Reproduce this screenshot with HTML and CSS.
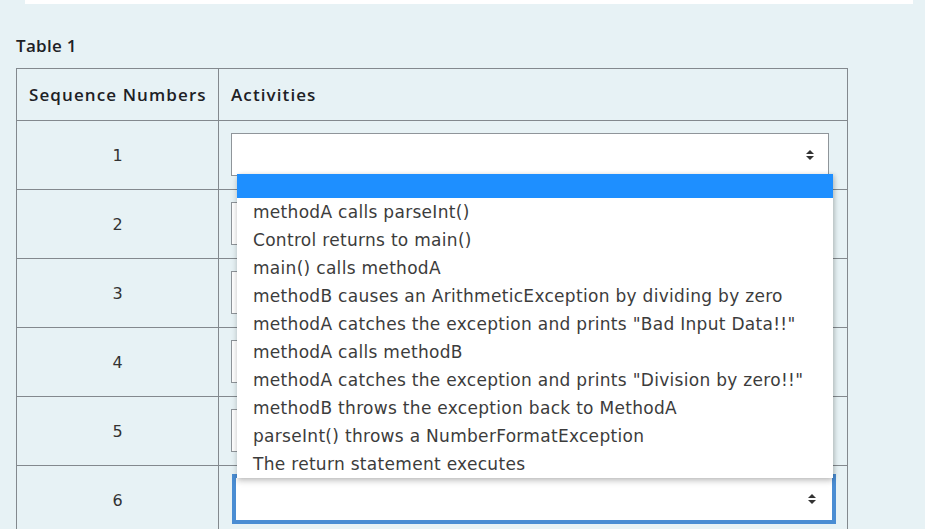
FILE: index.html
```html
<!DOCTYPE html>
<html lang="en">
<head>
<meta charset="utf-8">
<title>Table 1</title>
<link rel="stylesheet" href="styles.css">
</head>
<body>
<div class="topbar"></div>
<div class="caption">Table 1</div>
<div class="grid">
  <div class="cell head num-head">Sequence Numbers</div>
  <div class="cell head">Activities</div>

  <div class="cell num">1</div>
  <div class="cell act"><div class="select"><svg class="arrow" width="10" height="12" viewBox="0 0 10 12"><path d="M1 5 L5 1 L9 5 Z M1 7 L5 11 L9 7 Z" fill="#333"/></svg></div></div>

  <div class="cell num">2</div>
  <div class="cell act"><div class="select"></div></div>

  <div class="cell num">3</div>
  <div class="cell act"><div class="select"></div></div>

  <div class="cell num">4</div>
  <div class="cell act"><div class="select"></div></div>

  <div class="cell num">5</div>
  <div class="cell act"><div class="select"></div></div>

  <div class="cell num">6</div>
  <div class="cell act"><div class="select focused"><svg class="arrow" width="10" height="12" viewBox="0 0 10 12"><path d="M1 5 L5 1 L9 5 Z M1 7 L5 11 L9 7 Z" fill="#333"/></svg></div></div>
</div>

<ul class="dropdown">
  <li class="opt blank"></li>
  <li class="opt">methodA calls parseInt()</li>
  <li class="opt">Control returns to main()</li>
  <li class="opt">main() calls methodA</li>
  <li class="opt">methodB causes an ArithmeticException by dividing by zero</li>
  <li class="opt">methodA catches the exception and prints "Bad Input Data!!"</li>
  <li class="opt">methodA calls methodB</li>
  <li class="opt">methodA catches the exception and prints "Division by zero!!"</li>
  <li class="opt">methodB throws the exception back to MethodA</li>
  <li class="opt">parseInt() throws a NumberFormatException</li>
  <li class="opt">The return statement executes</li>
</ul>
</body>
</html>
```
FILE: styles.css
```css
html, body {
  margin: 0;
  padding: 0;
}
body {
  background: #e7f2f5;
  font-family: "DejaVu Sans", "Open Sans", sans-serif;
  color: #1d2125;
  width: 925px;
  height: 529px;
  overflow: hidden;
  position: relative;
}
.topbar {
  height: 4px;
  margin-left: 25px;
  width: 888px;
  background: #ffffff;
}
.caption {
  margin: 30px 0 10px 16px;
  font-family: "Open Sans", sans-serif;
  font-size: 17px;
  line-height: 24px;
  font-weight: 600;
  letter-spacing: 0.3px;
}
.grid {
  display: grid;
  grid-template-columns: 202px 629px;
  grid-template-rows: 52px repeat(6, 69px);
  margin-left: 16px;
  width: max-content;
  border-left: 1px solid #83898e;
  border-top: 1px solid #83898e;
}
.cell {
  box-sizing: border-box;
  border-right: 1px solid #83898e;
  border-bottom: 1px solid #83898e;
}
.head {
  display: flex;
  align-items: center;
  padding-left: 12px;
  font-family: "Open Sans", sans-serif;
  font-size: 17px;
  font-weight: 600;
  letter-spacing: 1.1px;
}
.num {
  display: flex;
  align-items: center;
  justify-content: center;
  font-size: 16px;
  color: #333;
}
.act {
  padding: 12px 0 0 12px;
}
.select {
  box-sizing: border-box;
  width: 598px;
  height: 43px;
  background: #fff;
  border: 1px solid #8f959a;
  position: relative;
}
.select .arrow {
  position: absolute;
  right: 13px;
  top: 15px;
}
.select.focused {
  border: 4px solid #4a8dd3;
  width: 604px;
  height: 50px;
  margin-top: -4px;
  margin-left: 1px;
}
.select.focused .arrow {
  right: 15px;
  top: 15px;
}
.dropdown {
  position: absolute;
  left: 237px;
  top: 174px;
  width: 596px;
  margin: 0;
  padding: 0;
  list-style: none;
  background: #fff;
  box-shadow: 0 3px 6px rgba(0, 0, 0, 0.22), 2px 0 4px rgba(0, 0, 0, 0.1);
  font-size: 17px;
  letter-spacing: 0.3px;
  color: #3c3c3c;
}
.opt {
  height: 28px;
  line-height: 28px;
  padding-left: 16px;
  white-space: nowrap;
}
.opt.blank {
  height: 24px;
  background: #1e8fff;
}
```
